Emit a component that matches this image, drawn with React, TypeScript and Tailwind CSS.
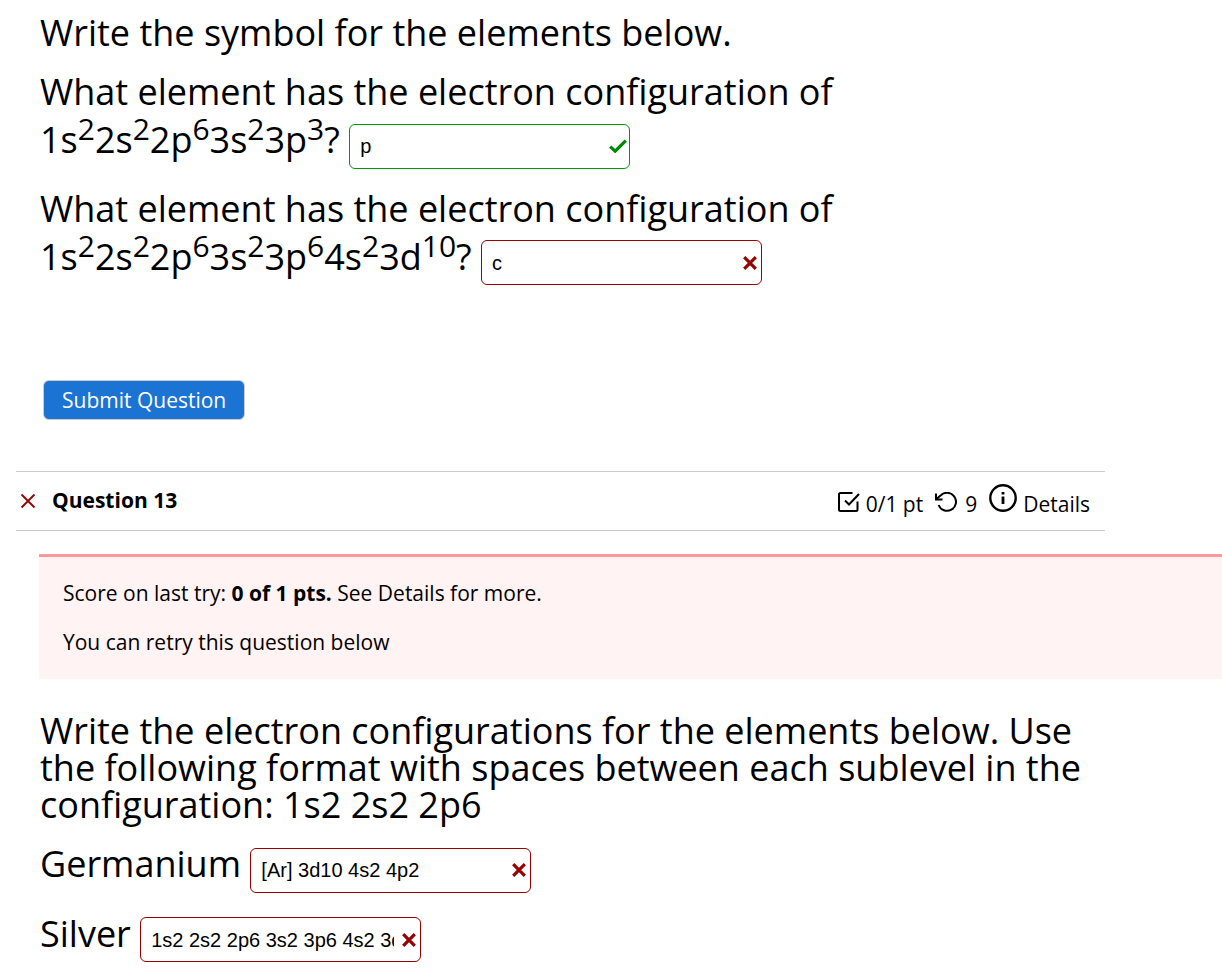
import type { ReactNode } from 'react'

type Status = 'right' | 'wrong'

function StatusIcon({ status }: { status: Status }) {
    if (status === 'right') {
        return (
            <svg viewBox="0 0 18 14" className="w-[18px] h-3.5 mr-[2px] shrink-0" fill="none" stroke="#008800" strokeWidth="3.2" aria-hidden="true">
                <path d="M1.2 7.6 L6.2 12.2 L16.8 1.6" />
            </svg>
        )
    }
    return (
        <svg viewBox="0 0 14 14" className="w-3.5 h-3.5 mr-1 shrink-0" fill="none" stroke="#990000" strokeWidth="3.2" aria-hidden="true">
            <path d="M1.2 1.2 L12.8 12.8 M12.8 1.2 L1.2 12.8" />
        </svg>
    )
}

function Answer({ label, value, status }: { label: string; value: string; status: Status }) {
    return (
        <span
            className={`inline-flex items-center align-baseline w-[281px] h-[45px] pl-[10px] border rounded-md bg-white ${
                status === 'right' ? 'border-[#009900]' : 'border-[#990000]'
            }`}
        >
            <input
                aria-label={label}
                defaultValue={value}
                className="min-w-0 flex-1 mr-2 font-['Liberation_Sans',sans-serif] text-[20px] leading-6 outline-none"
            />
            <StatusIcon status={status} />
        </span>
    )
}

function Sup({ children }: { children: ReactNode }) {
    return <sup className="static align-super text-[30px] leading-[38px]">{children}</sup>
}

function Configuration({ parts }: { parts: [string, string][] }) {
    return (
        <>
            {parts.map(([orbital, count]) => (
                <span key={orbital}>
                    {orbital}
                    <Sup>{count}</Sup>
                </span>
            ))}
            ?{' '}
        </>
    )
}

function QuestionHeader() {
    return (
        <header className="flex items-center justify-between max-w-[1089px] h-[60px] ml-4 pl-1 pr-[15px] border-y border-[#cccccc] text-[21px]">
            <h2 className="flex items-center gap-4 font-bold">
                <svg viewBox="0 0 16 16" className="w-4 h-4" fill="none" stroke="#990000" strokeWidth="1.8" aria-label="Incorrect">
                    <path d="M1.5 1.5 L14.5 14.5 M14.5 1.5 L1.5 14.5" />
                </svg>
                Question 13
            </h2>
            <div className="flex items-baseline gap-3 pt-[2px]">
                <span className="flex items-baseline gap-[6px]">
                    <svg viewBox="0 0 22 20" className="w-[22px] h-5" fill="none" stroke="#000" strokeWidth="2" aria-hidden="true">
                        <path d="M7 8.5 L11 12.5 L21 2" />
                        <path d="M19.5 9.5 V17.5 Q19.5 19 18 19 H2.5 Q1 19 1 17.5 V2.5 Q1 1 2.5 1 H14.5" />
                    </svg>
                    0/1 pt
                </span>
                <span className="flex items-baseline gap-2">
                    <svg viewBox="0 0 22 20" className="w-[22px] h-5" fill="none" stroke="#000" strokeWidth="2" aria-hidden="true">
                        <path d="M1 1.5 V7.5 H7.5" />
                        <path d="M3.6 13 A9 9 0 1 0 5.5 3.6 L1 7.5" />
                    </svg>
                    9
                </span>
                <a href="#details" className="flex items-baseline gap-[6px]">
                    <svg viewBox="0 0 28 28" className="w-7 h-7" fill="none" stroke="#000" strokeWidth="2.4" aria-hidden="true">
                        <circle cx="14" cy="14" r="12.7" />
                        <path d="M14 12.5 V20 M14 8 V10.5" strokeWidth="2.8" />
                    </svg>
                    Details
                </a>
            </div>
        </header>
    )
}

export default function App() {
    return (
        <main className="bg-white text-black font-['Open_Sans',sans-serif] pb-4">
            <form className="pl-10 pt-[14px] text-[36px] leading-[37px]" onSubmit={(e) => e.preventDefault()}>
                <p>Write the symbol for the elements below.</p>
                <p className="mt-[22px] max-w-[1060px]">
                    What element has the electron configuration of
                    <br />
                    <Configuration parts={[['1s', '2'], ['2s', '2'], ['2p', '6'], ['3s', '2'], ['3p', '3']]} />
                    <Answer label="Element symbol 1" value="p" status="right" />
                </p>
                <p className="mt-[21px] max-w-[1060px]">
                    What element has the electron configuration of
                    <br />
                    <Configuration parts={[['1s', '2'], ['2s', '2'], ['2p', '6'], ['3s', '2'], ['3p', '6'], ['4s', '2'], ['3d', '10']]} />
                    <Answer label="Element symbol 2" value="c" status="wrong" />
                </p>
                <button
                    type="submit"
                    className="block mt-[95px] ml-[3px] h-10 px-[18px] rounded-md border border-[#cccccc] bg-[#1b74d3] text-white text-[21px] leading-none"
                >
                    Submit Question
                </button>
            </form>
            <div className="mt-[51px]">
                <QuestionHeader />
            </div>
            <section className="mt-[23px] ml-[39px] border-t-[3px] border-[#ff9999] bg-[#fff3f3] px-6 py-[22px] text-[21px] leading-[29px]">
                <p>
                    Score on last try: <b>0 of 1 pts.</b> See Details for more.
                </p>
                <p className="mt-5">You can retry this question below</p>
            </section>
            <form className="pl-10 mt-[33px] text-[36px] leading-[37px]" onSubmit={(e) => e.preventDefault()}>
                <p className="max-w-[1060px]">
                    Write the electron configurations for the elements below. Use the following format with spaces between
                    each sublevel in the configuration: 1s2 2s2 2p6
                </p>
                <p className="mt-[22px]">
                    Germanium <Answer label="Germanium" value="[Ar] 3d10 4s2 4p2" status="wrong" />
                </p>
                <p className="mt-[22px]">
                    Silver <Answer label="Silver" value="1s2 2s2 2p6 3s2 3p6 4s2 3d10 4p6 5s1 4d10" status="wrong" />
                </p>
            </form>
        </main>
    )
}
